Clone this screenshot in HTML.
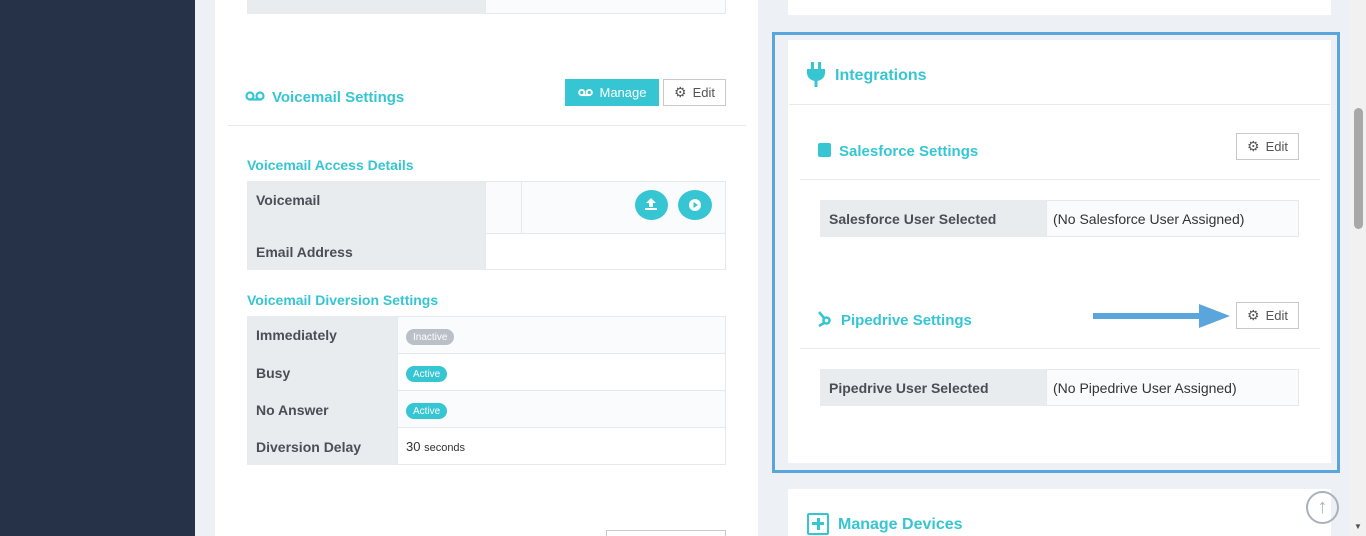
<!DOCTYPE html>
<html style="overflow:hidden;height:536px"><head><style>
*{box-sizing:border-box;margin:0;padding:0}
body{width:1366px;height:536px;overflow:hidden;background:#edf0f5;font-family:"Liberation Sans",sans-serif;position:relative}
.a{position:absolute}
.t{color:#36c6d3;font-weight:bold}
.lbl{background:#e9ecef;color:#4a4f55;font-weight:bold;font-size:14px}
.val{background:#fafbfc;border:1px solid #e6e9ec;font-size:13px;color:#333}
.btn{border:1px solid #c8c8c8;background:#fff;color:#555;font-size:13px;display:flex;align-items:center;justify-content:center;gap:6px}
.badge{position:absolute;height:16px;border-radius:8px;color:#fff;font-size:10px;line-height:17px;padding:0 7px}
.hr{position:absolute;height:1px;background:#e8eaed}
</style></head><body>
<div class="a" style="left:0;top:0;width:195px;height:536px;background:#253247"></div>
<div class="a" style="left:215px;top:0;width:543px;height:536px;background:#fff"></div>
<div class="a lbl" style="left:247px;top:0;width:238px;height:14px"></div>
<div class="a val" style="left:485px;top:-1px;width:241px;height:15px"></div>

<svg class="a" style="left:245px;top:90px" width="20" height="12" viewBox="0 0 20 12"><circle cx="5" cy="6" r="3.5" fill="none" stroke="#36c6d3" stroke-width="2.2"/><circle cx="15" cy="6" r="3.5" fill="none" stroke="#36c6d3" stroke-width="2.2"/><line x1="5" y1="9.5" x2="15" y2="9.5" stroke="#36c6d3" stroke-width="2.2"/></svg>
<div class="a t" style="left:272px;top:89px;font-size:15px">Voicemail Settings</div>
<div class="a" style="left:565px;top:79px;width:94px;height:27px;background:#36c6d3;color:#fff;font-size:13px;display:flex;align-items:center;justify-content:center;gap:7px"><svg width="15" height="9" viewBox="0 0 20 12"><circle cx="5" cy="6" r="3.5" fill="none" stroke="#fff" stroke-width="2.5"/><circle cx="15" cy="6" r="3.5" fill="none" stroke="#fff" stroke-width="2.5"/><line x1="5" y1="9.5" x2="15" y2="9.5" stroke="#fff" stroke-width="2.5"/></svg>Manage</div>
<div class="a btn" style="left:663px;top:79px;width:63px;height:27px"><span style="font-size:14px;color:#555">⚙</span>Edit</div>
<div class="hr" style="left:228px;top:125px;width:518px"></div>

<div class="a t" style="left:247px;top:157px;font-size:14px">Voicemail Access Details</div>
<div class="a lbl" style="left:247px;top:181px;width:238px;height:89px"></div>
<div class="a" style="left:256px;top:192px;font-size:14px;font-weight:bold;color:#4a4f55">Voicemail</div>
<div class="a" style="left:256px;top:244px;font-size:14px;font-weight:bold;color:#4a4f55">Email Address</div>
<div class="a val" style="left:485px;top:181px;width:37px;height:53px"></div>
<div class="a val" style="left:521px;top:181px;width:205px;height:53px"></div>
<div class="a val" style="left:485px;top:233px;width:241px;height:37px;background:#fff"></div>
<div class="a" style="left:635px;top:190px;width:33px;height:30px;border-radius:50%;background:#36c6d3"></div>
<svg class="a" style="left:644px;top:197px" width="14" height="14" viewBox="0 0 14 14"><path d="M7 1 L12 6 H9 V10 H5 V6 H2Z" fill="#fff"/><rect x="1" y="11" width="12" height="2" fill="#fff"/></svg>
<div class="a" style="left:678px;top:190px;width:34px;height:30px;border-radius:50%;background:#36c6d3"></div>
<svg class="a" style="left:688px;top:198px" width="14" height="14" viewBox="0 0 14 14"><circle cx="7" cy="7" r="6" fill="#fff"/><path d="M5.5 4 L10 7 L5.5 10Z" fill="#36c6d3"/></svg>

<div class="a t" style="left:247px;top:292px;font-size:14px">Voicemail Diversion Settings</div>
<div class="a lbl" style="left:247px;top:316px;width:151px;height:149px"></div>
<div class="a val" style="left:397px;top:316px;width:329px;height:38px"></div>
<div class="a val" style="left:397px;top:353px;width:329px;height:38px;background:#fff"></div>
<div class="a val" style="left:397px;top:390px;width:329px;height:38px"></div>
<div class="a val" style="left:397px;top:427px;width:329px;height:38px;background:#fff"></div>
<div class="a" style="left:256px;top:327px;font-size:14px;font-weight:bold;color:#4a4f55">Immediately</div>
<div class="a" style="left:256px;top:365px;font-size:14px;font-weight:bold;color:#4a4f55">Busy</div>
<div class="a" style="left:256px;top:402px;font-size:14px;font-weight:bold;color:#4a4f55">No Answer</div>
<div class="a" style="left:256px;top:439px;font-size:14px;font-weight:bold;color:#4a4f55">Diversion Delay</div>
<div class="badge" style="left:406px;top:329px;background:#bac0c7">Inactive</div>
<div class="badge" style="left:406px;top:366px;background:#36c6d3">Active</div>
<div class="badge" style="left:406px;top:403px;background:#36c6d3">Active</div>
<div class="a" style="left:406px;top:439px;font-size:13px;color:#333">30 <span style="font-size:11px">seconds</span></div>
<div class="a" style="left:606px;top:530px;width:120px;height:6px;border:1px solid #c8c8c8;border-bottom:none"></div>

<div class="a" style="left:788px;top:0;width:543px;height:15px;background:#fff"></div>
<div class="a" style="left:772px;top:32px;width:568px;height:441px;border:3px solid #5aa5dc;background:#edf0f5"></div>
<div class="a" style="left:788px;top:40px;width:543px;height:423px;background:#fff"></div>
<svg class="a" style="left:806px;top:61px" width="20" height="27" viewBox="0 0 20 27"><rect x="5" y="1" width="3" height="8" fill="#36c6d3"/><rect x="12" y="1" width="3" height="8" fill="#36c6d3"/><path d="M1 8 H19 V12 A9 8 0 0 1 1 12Z" fill="#36c6d3"/><rect x="8.5" y="18" width="3" height="8" fill="#36c6d3"/></svg>
<div class="a t" style="left:835px;top:67px;font-size:16px">Integrations</div>
<div class="hr" style="left:789px;top:104px;width:541px"></div>

<div class="a" style="left:818px;top:143px;width:13px;height:14px;border-radius:2px;background:#36c6d3"></div>
<div class="a t" style="left:839px;top:143px;font-size:15px">Salesforce Settings</div>
<div class="a btn" style="left:1236px;top:133px;width:63px;height:27px"><span style="font-size:14px">⚙</span>Edit</div>
<div class="hr" style="left:800px;top:179px;width:520px"></div>
<div class="a lbl" style="left:820px;top:200px;width:226px;height:37px;padding:11px 9px">Salesforce User Selected</div>
<div class="a val" style="left:1046px;top:200px;width:253px;height:37px;padding:10px 6px;font-size:14px">(No Salesforce User Assigned)</div>

<svg class="a" style="left:817px;top:310px" width="16" height="18" viewBox="0 0 16 18"><g fill="none" stroke="#36c6d3" stroke-width="2.6"><circle cx="9.5" cy="10.5" r="3"/><line x1="2" y1="2" x2="7" y2="8"/><line x1="2" y1="16" x2="7" y2="13"/></g></svg>
<div class="a t" style="left:841px;top:312px;font-size:15px">Pipedrive Settings</div>
<svg class="a" style="left:1093px;top:304px" width="137" height="24" viewBox="0 0 137 24"><rect x="0" y="9" width="110" height="6" fill="#5aa5dc"/><path d="M106 0 L137 12 L106 24Z" fill="#5aa5dc"/></svg>
<div class="a btn" style="left:1236px;top:302px;width:63px;height:27px"><span style="font-size:14px">⚙</span>Edit</div>
<div class="hr" style="left:800px;top:348px;width:520px"></div>
<div class="a lbl" style="left:820px;top:369px;width:226px;height:37px;padding:11px 9px">Pipedrive User Selected</div>
<div class="a val" style="left:1046px;top:369px;width:253px;height:37px;padding:10px 6px;font-size:14px">(No Pipedrive User Assigned)</div>

<div class="a" style="left:788px;top:489px;width:543px;height:47px;background:#fff"></div>
<div class="a" style="left:807px;top:513px;width:22px;height:22px;border:2.5px solid #36c6d3;border-radius:2px"></div>
<div class="a" style="left:812px;top:522px;width:12px;height:3px;background:#36c6d3"></div>
<div class="a" style="left:816.5px;top:518px;width:3px;height:12px;background:#36c6d3"></div>
<div class="a t" style="left:838px;top:516px;font-size:16px">Manage Devices</div>
<div class="a" style="left:1306px;top:491px;width:33px;height:33px;border:2px solid #a9b1bb;border-radius:50%;color:#a9b1bb;font-size:20px;text-align:center;line-height:29px">↑</div>

<div class="a" style="left:1350px;top:0;width:16px;height:536px;background:#f1f1f1"></div>
<div class="a" style="left:1354px;top:108px;width:9px;height:121px;border-radius:5px;background:#a8a8a8"></div>
<div class="a" style="left:1354px;top:522px;font-size:8px;color:#505050">▼</div>
</body></html>
